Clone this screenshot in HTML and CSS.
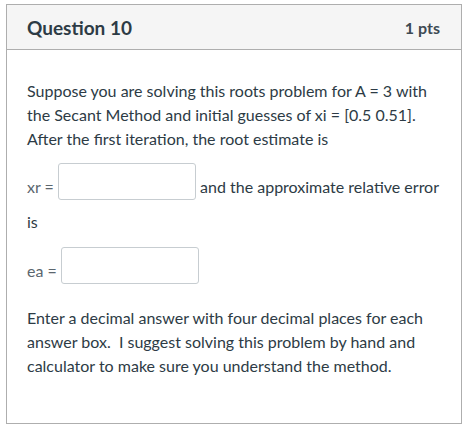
FILE: index.html
```html
<!DOCTYPE html>
<html>
<head>
<meta charset="utf-8">
<link rel="stylesheet" href="styles.css">
</head>
<body>
<div class="question">
  <div class="q-header">
    <span class="q-title">Question 10</span>
    <span class="q-pts">1 pts</span>
  </div>
  <div class="q-body">
    <p class="para">Suppose you are solving this roots problem for A = 3 with the Secant Method and initial guesses of xi = [0.5 0.51]. After the first iteration, the root estimate is</p>
    <p class="para row1"><span class="lbl">xr =</span> <input class="ans ans-xr" type="text"> <span class="tail">and the approximate relative error</span> <span class="tail">is</span></p>
    <p class="para row2"><span class="lbl">ea =</span> <input class="ans ans-ea" type="text"></p>
    <p class="para last">Enter a decimal answer with four decimal places for each answer box.&nbsp; I suggest solving this problem by hand and calculator to make sure you understand the method.</p>
  </div>
</div>
</body>
</html>
```
FILE: styles.css
```css
html, body {
  margin: 0;
  padding: 0;
  background: #ffffff;
}
body {
  font-family: Lato, "Liberation Sans", sans-serif;
  color: #2d3b45;
}
.question {
  margin: 4px 0 0 6px;
  width: 456px;
  height: 420px;
  box-sizing: border-box;
  border: 1px solid #aeaeae;
}
.q-header {
  height: 45px;
  box-sizing: border-box;
  background: #f5f5f5;
  border-bottom: 1px solid #aeaeae;
  display: flex;
  align-items: center;
  justify-content: space-between;
  padding: 0 21px 0 20px;
}
.q-title {
  font-size: 19px;
  font-weight: 700;
}
.q-pts {
  font-size: 16px;
  font-weight: 700;
  color: #3d4a53;
}
.q-body {
  padding: 29px 20px 0 20px;
}
.para {
  margin: 0 0 12px 0;
  font-size: 16px;
  line-height: 24px;
}
.lbl {
  font-size: 16px;
  color: #5b666e;
}
.ans {
  display: inline-block;
  box-sizing: border-box;
  height: 37px;
  border: 1px solid #c7cdd1;
  border-radius: 3px;
  background: #fff;
  padding: 0 6px;
  margin: 0 0 10px 0;
  vertical-align: 5px;
  font: inherit;
}
.ans-xr { width: 138px; }
.ans-ea { width: 138px; }
.row2 { margin-top: 13px; }
```
